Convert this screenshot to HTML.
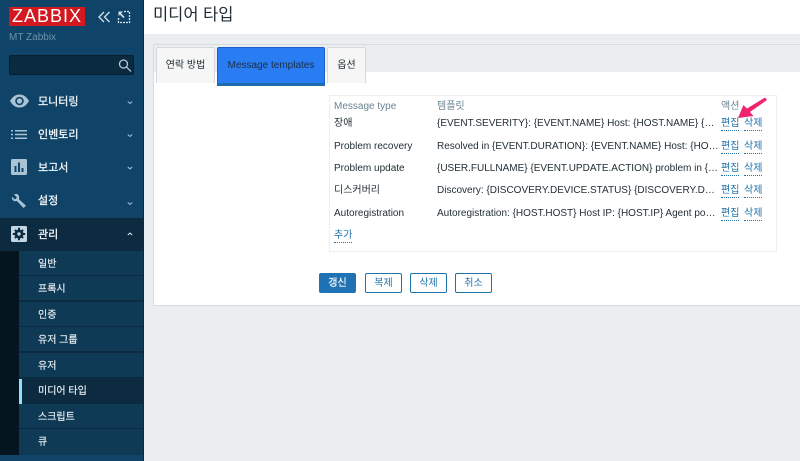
<!DOCTYPE html>
<html><head><meta charset="utf-8">
<style>
*{box-sizing:border-box}
html,body{margin:0;padding:0;width:800px;height:461px;overflow:hidden;background:#ebeef0;font-family:"Liberation Sans","Noto Sans CJK KR",sans-serif;font-size:10.5px;color:#1f2c33}
.a{position:absolute;white-space:nowrap}
#side{position:absolute;left:0;top:0;width:143px;height:461px;background:#0f4468}
#sb{position:absolute;left:143px;top:0;width:1px;height:461px;background:#0b2a40}
.m{position:absolute;left:38px;color:#f2f6f8;font-size:11px;line-height:14px;-webkit-text-stroke:.3px #f2f6f8}
.sub{position:absolute;left:19px;width:124px;height:25px;background:#0f3a56;border-bottom:1px solid #0a2a3f;color:#e8eef2;font-size:10px;line-height:27px;padding-left:19px;-webkit-text-stroke:.15px #e8eef2}
.lnk{position:absolute;color:#1f72a8;border-bottom:1px dotted #1f72a8;line-height:13px;height:14px;font-size:10px}
.row{position:absolute;left:334px;font-size:10px;line-height:13px;white-space:nowrap}
.t{position:absolute;left:437px;font-size:10px;line-height:13px;white-space:nowrap;width:280px}
.btn{position:absolute;top:273px;height:20px;width:37px;border:1px solid #1f72a8;border-radius:2px;background:#fff;color:#1f72a8;font-size:10px;text-align:center;line-height:19px}
</style></head><body>
<div id="side"></div><div id="sb"></div>
<div class="a" style="left:9px;top:7px;width:76px;height:19px;background:#d3191f;color:#fff;font-size:18px;line-height:19px;text-align:center;letter-spacing:1px">ZABBIX</div>
<svg class="a" style="left:97px;top:10px" width="34" height="14" fill="none" stroke="#d5e2ea" stroke-width="1.300"><path d="M7 2 2 7 7 12M12.500 2 7.500 7 12.500 12"/><path d="M27 1.500h5.500v11h-11V8" stroke-dasharray="2 1"/><path d="M23 3.500 27 7.500" stroke-width="1.600"/><path d="M21.500 1.500h4.500L21.500 6z" fill="#d5e2ea" stroke="none"/></svg>
<div class="a" style="left:9px;top:31px;color:#6d92aa;font-size:10px;line-height:14px">MT Zabbix</div>
<div class="a" style="left:9px;top:55px;width:125px;height:20px;background:#0a2a3f;border:1px solid #07202f;border-radius:2px"></div>
<svg class="a" style="left:117px;top:58px" width="16" height="15" fill="none" stroke="#b5c6d2" stroke-width="1.300"><circle cx="6.500" cy="6" r="4"/><path d="M9.500 9 14 13.500"/></svg>

<svg class="a" style="left:10px;top:94px" width="19" height="14"><path d="M0 7C3 2 6 .5 9.500.5S16 2 19 7c-3 5-6 6.500-9.500 6.500S3 12 0 7z" fill="#a9c3d5"/><circle cx="9.500" cy="7" r="4.300" fill="#0f4468"/><circle cx="9.500" cy="7" r="2.600" fill="#a9c3d5"/></svg>
<div class="m" style="top:95px">모니터링</div>
<svg class="a" style="left:11px;top:129px" width="17" height="11" fill="#a9c3d5"><path d="M0 1h2v1.500H0zM4 1h12v1.500H4zM0 4.800h2v1.500H0zM4 4.800h12v1.500H4zM0 8.500h2V10H0zM4 8.500h12V10H4z"/></svg>
<div class="m" style="top:128px">인벤토리</div>
<svg class="a" style="left:11px;top:159px" width="16" height="16"><rect width="16" height="16" rx="1.500" fill="#a9c3d5"/><path d="M3.500 7h2v6h-2zM7 3.500h2V13H7zM10.500 9h2v4h-2z" fill="#0f4468"/></svg>
<div class="m" style="top:161px">보고서</div>
<svg class="a" style="left:11px;top:193px" width="16" height="16" fill="none"><path d="M3 1.500 6 4.500 3.800 6.500 1 3.800C.5 6 1.500 8 4 8.300c1 0 1.500-.2 2-.3L12.500 15l2.500-2.200L8 6.300C8.500 4 8 2 6 1 5 .6 4 1 3 1.500z" fill="#a9c3d5"/></svg>
<div class="m" style="top:194px">설정</div>
<div class="a" style="left:0;top:218px;width:143px;height:243px;background:#0c2b40"></div>
<svg class="a" style="left:11px;top:226px" width="16" height="16"><rect width="16" height="16" rx="1.500" fill="#c3d6e2"/><circle cx="8" cy="8" r="4.500" fill="#0c2b40"/><path d="M7 1.800h2v12.400H7zM1.800 7h12.400v2H1.800zM3.200 4.600l1.400-1.400 8.200 8.200-1.400 1.400zM11.400 3.200l1.400 1.400-8.200 8.200-1.400-1.400z" fill="#0c2b40"/><circle cx="8" cy="8" r="1.700" fill="#c3d6e2"/></svg>
<div class="m" style="top:228px">관리</div>
<div class="a" style="left:0;top:251px;width:19px;height:204px;background:#05151f"></div>
<div class="sub" style="top:251px">일반</div>
<div class="sub" style="top:276px">프록시</div>
<div class="sub" style="top:302px">인증</div>
<div class="sub" style="top:327px">유저 그룹</div>
<div class="sub" style="top:353px">유저</div>
<div class="sub" style="top:378px;background:#0c2b40">미디어 타입</div>
<div class="sub" style="top:404px">스크립트</div>
<div class="sub" style="top:429px;height:26px;border-bottom:none">큐</div>
<div class="a" style="left:19px;top:379px;width:3px;height:25px;background:#8fe3f5"></div>
<div class="a" style="left:0;top:455px;width:143px;height:6px;background:#0f4468"></div>
<svg class="a" style="left:127px;top:99px" width="6" height="90" fill="none" stroke="#a9c3d5" stroke-width="1"><path d="M.8 2.500 3 4.500 5.200 2.500M.8 35.500 3 37.500 5.200 35.500M.8 68 3 70 5.200 68"/></svg>
<svg class="a" style="left:127px;top:200px" width="6" height="36" fill="none" stroke-width="1"><path d="M.8 2.500 3 4.500 5.200 2.500" stroke="#a9c3d5"/><path d="M.8 35 3 33 5.200 35" stroke="#e8eef2"/></svg>

<div class="a" style="left:144px;top:0;width:656px;height:34px;background:#fff"></div>
<div class="a" style="left:153px;top:3px;font-size:16.500px;line-height:24px;color:#1f2c33">미디어 타입</div>
<div class="a" style="left:144px;top:34px;width:656px;height:427px;background:#ebeef0"></div>

<div class="a" style="left:153px;top:44px;width:647px;height:262px;background:#fff;border-top:1px solid #d8dcdf;border-left:1px solid #d8dcdf;border-bottom:1px solid #d8dcdf"></div>
<div class="a" style="left:154px;top:45px;width:646px;height:27px;background:#ebeef0"></div>
<div class="a" style="left:156px;top:47px;width:59px;height:36px;background:#f6f6f6;border:1px solid #d5d9dc;border-bottom:none;border-radius:2px 2px 0 0;font-size:10px;text-align:center;line-height:36px;color:#1f2c33">연락 방법</div>
<div class="a" style="left:217px;top:47px;width:108px;height:39px;background:#2a7cf2;border:1px solid #1a5fc8;border-bottom:3px solid #1f6bb0;border-radius:2px 2px 0 0;font-size:10px;text-align:center;line-height:36px;color:#1c3048">Message templates</div>
<div class="a" style="left:327px;top:47px;width:39px;height:36px;background:#f6f6f6;border:1px solid #d5d9dc;border-bottom:none;border-radius:2px 2px 0 0;font-size:10px;text-align:center;line-height:36px;color:#1f2c33">옵션</div>

<div class="a" style="left:329px;top:95px;width:448px;height:157px;background:#fff;border:1px solid #eceef0"></div>
<div class="row" style="top:100px;color:#6a8494">Message type</div>
<div class="t" style="top:100px;color:#6a8494">템플릿</div>
<div class="a" style="left:721px;top:100px;color:#6a8494;font-size:10px;line-height:13px">액션</div>

<div class="row" style="top:117px">장애</div>
<div class="t" style="top:117px">{EVENT.SEVERITY}: {EVENT.NAME} Host: {HOST.NAME} {…</div>
<div class="row" style="top:140px">Problem recovery</div>
<div class="t" style="top:140px">Resolved in {EVENT.DURATION}: {EVENT.NAME} Host: {HO…</div>
<div class="row" style="top:162px">Problem update</div>
<div class="t" style="top:162px">{USER.FULLNAME} {EVENT.UPDATE.ACTION} problem in {…</div>
<div class="row" style="top:184px">디스커버리</div>
<div class="t" style="top:184px">Discovery: {DISCOVERY.DEVICE.STATUS} {DISCOVERY.D…</div>
<div class="row" style="top:207px">Autoregistration</div>
<div class="t" style="top:207px">Autoregistration: {HOST.HOST} Host IP: {HOST.IP} Agent po…</div>

<div class="lnk" style="left:721px;top:117px">편집</div><div class="lnk" style="left:744px;top:117px">삭제</div>
<div class="lnk" style="left:721px;top:140px">편집</div><div class="lnk" style="left:744px;top:140px">삭제</div>
<div class="lnk" style="left:721px;top:162px">편집</div><div class="lnk" style="left:744px;top:162px">삭제</div>
<div class="lnk" style="left:721px;top:184px">편집</div><div class="lnk" style="left:744px;top:184px">삭제</div>
<div class="lnk" style="left:721px;top:207px">편집</div><div class="lnk" style="left:744px;top:207px">삭제</div>
<div class="lnk" style="left:334px;top:229px">추가</div>

<svg class="a" style="left:735px;top:95px" width="35" height="30"><path d="M3 23 8.500 10 12 13.500 30 2.500 32 5 15 17 18.500 21z" fill="#f0246e"/></svg>

<div class="btn" style="left:319px;background:#1f72b3;color:#fff;border-color:#1f72b3;-webkit-text-stroke:.2px #fff">갱신</div>
<div class="btn" style="left:365px">복제</div>
<div class="btn" style="left:410px">삭제</div>
<div class="btn" style="left:455px">취소</div>
</body></html>
